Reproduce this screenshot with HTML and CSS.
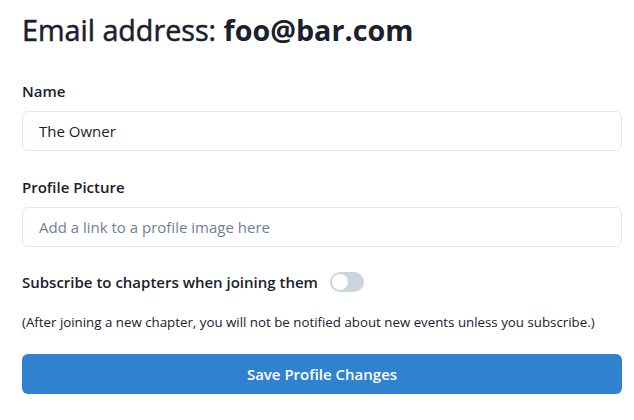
FILE: index.html
```html
<!DOCTYPE html>
<html lang="en">
<head>
<meta charset="utf-8">
<title>Profile</title>
<link rel="stylesheet" href="styles.css">
</head>
<body>
<main class="page">
  <h1 class="title"><span class="title-lead">Email address:</span> <strong>foo@bar.com</strong></h1>
  <form class="form">
    <div class="field">
      <label class="label" for="name">Name</label>
      <input class="input" id="name" type="text" value="The Owner">
    </div>
    <div class="field">
      <label class="label" for="pic">Profile Picture</label>
      <input class="input" id="pic" type="text" placeholder="Add a link to a profile image here">
    </div>
    <div class="switch-row">
      <span class="label inline">Subscribe to chapters when joining them</span>
      <span class="switch"><span class="thumb"></span></span>
    </div>
    <p class="note">(After joining a new chapter, you will not be notified about new events unless you subscribe.)</p>
    <button class="button" type="button">Save Profile Changes</button>
  </form>
</main>
</body>
</html>
```
FILE: styles.css
```css
* { box-sizing: border-box; }
body {
  margin: 0;
  background: #fff;
  color: #1A202C;
  font-family: "Open Sans", "Noto Sans", sans-serif;
}
.page {
  padding: 12px 12px 0 22px;
}
.title {
  margin: 0;
  font-size: 28.7px;
  line-height: 36px;
  font-weight: 400;
}
.title-lead { -webkit-text-stroke: 0.5px #1A202C; }
.title strong { font-weight: 700; }
.form {
  display: flex;
  flex-direction: column;
  margin-top: 31px;
}
.field {
  display: flex;
  flex-direction: column;
  margin-bottom: 24px;
}
.label {
  font-size: 15px;
  line-height: 24px;
  font-weight: 600;
  margin-bottom: 8px;
}
.label.inline { margin: 0; }
.input {
  width: 600px;
  height: 40px;
  border: 1px solid #E2E8F0;
  border-radius: 6px;
  padding: 0 16px;
  font: inherit;
  font-size: 15px;
  color: #1A202C;
  outline: none;
}
.input::placeholder { color: #718096; opacity: 1; }
.switch-row {
  display: flex;
  align-items: center;
  gap: 12px;
  margin-top: -1px;
}
.switch {
  display: inline-flex;
  align-items: center;
  width: 34px;
  height: 20px;
  padding: 2px;
  border-radius: 999px;
  background: #CBD5E0;
}
.thumb {
  width: 16px;
  height: 16px;
  border-radius: 50%;
  background: #fff;
}
.note {
  margin: 18px 0 0;
  font-size: 13.3px;
  line-height: 20px;
}
.button {
  margin-top: 22px;
  width: 600px;
  height: 40px;
  border: none;
  border-radius: 6px;
  background: #3182CE;
  color: #fff;
  font: inherit;
  font-size: 15px;
  font-weight: 600;
}
```
